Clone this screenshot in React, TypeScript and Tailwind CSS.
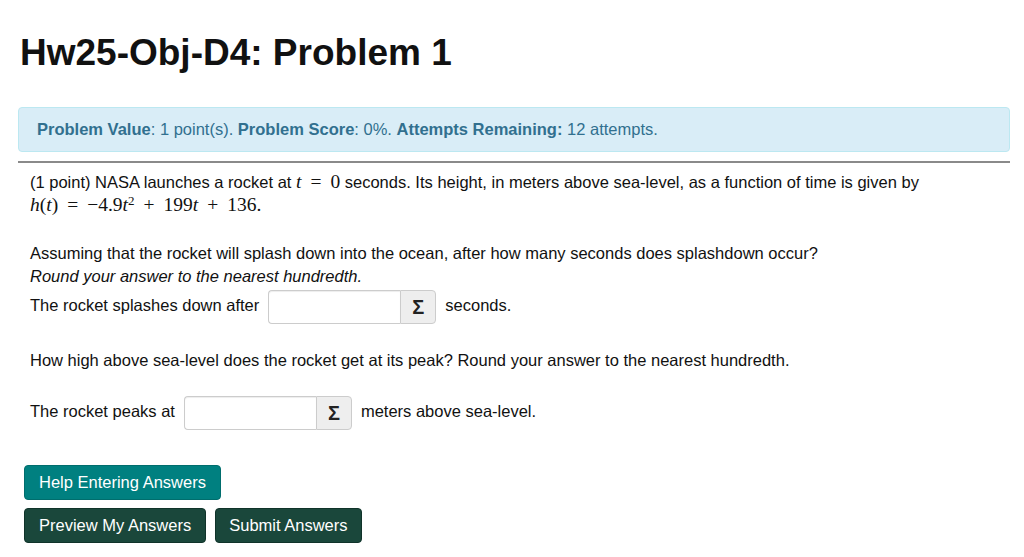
import React from "react";

const sans = { fontFamily: '"Liberation Sans", Arial, sans-serif' };

function M({ children }: { children: React.ReactNode }) {
  return <span className="font-['Liberation_Serif',serif] text-[19.5px] leading-[20px]">{children}</span>;
}

function I({ children }: { children: React.ReactNode }) {
  return <span className="italic">{children}</span>;
}

function Op({ children }: { children: React.ReactNode }) {
  return <span className="mx-[9px]">{children}</span>;
}

function AnswerBox({ width }: { width: number }) {
  return (
    <span className="mx-[9px] inline-flex h-[34px] align-middle" style={{ width }}>
      <span className="flex-1 rounded-l-[4px] border border-r-0 border-[#cccccc] bg-white shadow-[inset_0_1px_1px_rgba(0,0,0,0.075)]" />
      <span className="flex w-[36px] items-center justify-center rounded-r-[4px] border border-[#cccccc] bg-[#eeeeee] text-[20px] font-black text-[#222]">
        Σ
      </span>
    </span>
  );
}

export default function App() {
  return (
    <div className="min-h-[557px] bg-white text-[#111]" style={sans}>
      <div className="pl-[18px] pr-[14px]">
        <h1 className="pt-[31px] pl-[2px] text-[37px] font-bold leading-[44px] text-[#111]">
          Hw25-Obj-D4: Problem 1
        </h1>
        <div className="mt-[32px] h-[45px] rounded-[4px] border border-[#bce8f1] bg-[#d9edf7] pl-[18px] text-[16.5px] leading-[43px] text-[#31708f]">
          <b>Problem Value</b>: 1 point(s). <b>Problem Score</b>: 0%. <b>Attempts Remaining:</b> 12 attempts.
        </div>
        <div className="mt-[9px] h-[2px] bg-[#8a8a8a]" />
        <div className="pl-[12px] pt-[8px] text-[16.5px] leading-[23px] text-[#111]">
          <p>
            (1 point) NASA launches a rocket at{" "}
            <M>
              <I>t</I>
              <Op>=</Op>0
            </M>{" "}
            seconds. Its height, in meters above sea-level, as a function of time is given by
          </p>
          <p>
            <M>
              <I>h</I>(<I>t</I>)<Op>=</Op>−4.9<I>t</I>
              <sup className="text-[13px]">2</sup>
              <Op>+</Op>199<I>t</I>
              <Op>+</Op>136.
            </M>
          </p>
          <p className="mt-[25px]">
            Assuming that the rocket will splash down into the ocean, after how many seconds does splashdown occur?
          </p>
          <p className="italic">Round your answer to the nearest hundredth.</p>
          <p className="mt-[2px]">
            The rocket splashes down after<AnswerBox width={168} />seconds.
          </p>
          <p className="mt-[25px]">
            How high above sea-level does the rocket get at its peak? Round your answer to the nearest hundredth.
          </p>
          <p className="mt-[24px]">
            The rocket peaks at<AnswerBox width={168} />meters above sea-level.
          </p>
        </div>
        <div className="mt-[35px] pl-[6px] flex flex-col gap-[8px] text-[16.5px] text-white">
          <div>
            <button className="h-[35px] rounded-[4px] border border-[#006d6d] bg-[#008080] px-[14px]">
              Help Entering Answers
            </button>
          </div>
          <div className="flex gap-[9px]">
            <button className="h-[35px] rounded-[4px] border border-[#10332a] bg-[#1a473b] px-[14px]">
              Preview My Answers
            </button>
            <button className="h-[35px] rounded-[4px] border border-[#10332a] bg-[#1a473b] px-[13px]">
              Submit Answers
            </button>
          </div>
        </div>
      </div>
    </div>
  );
}
